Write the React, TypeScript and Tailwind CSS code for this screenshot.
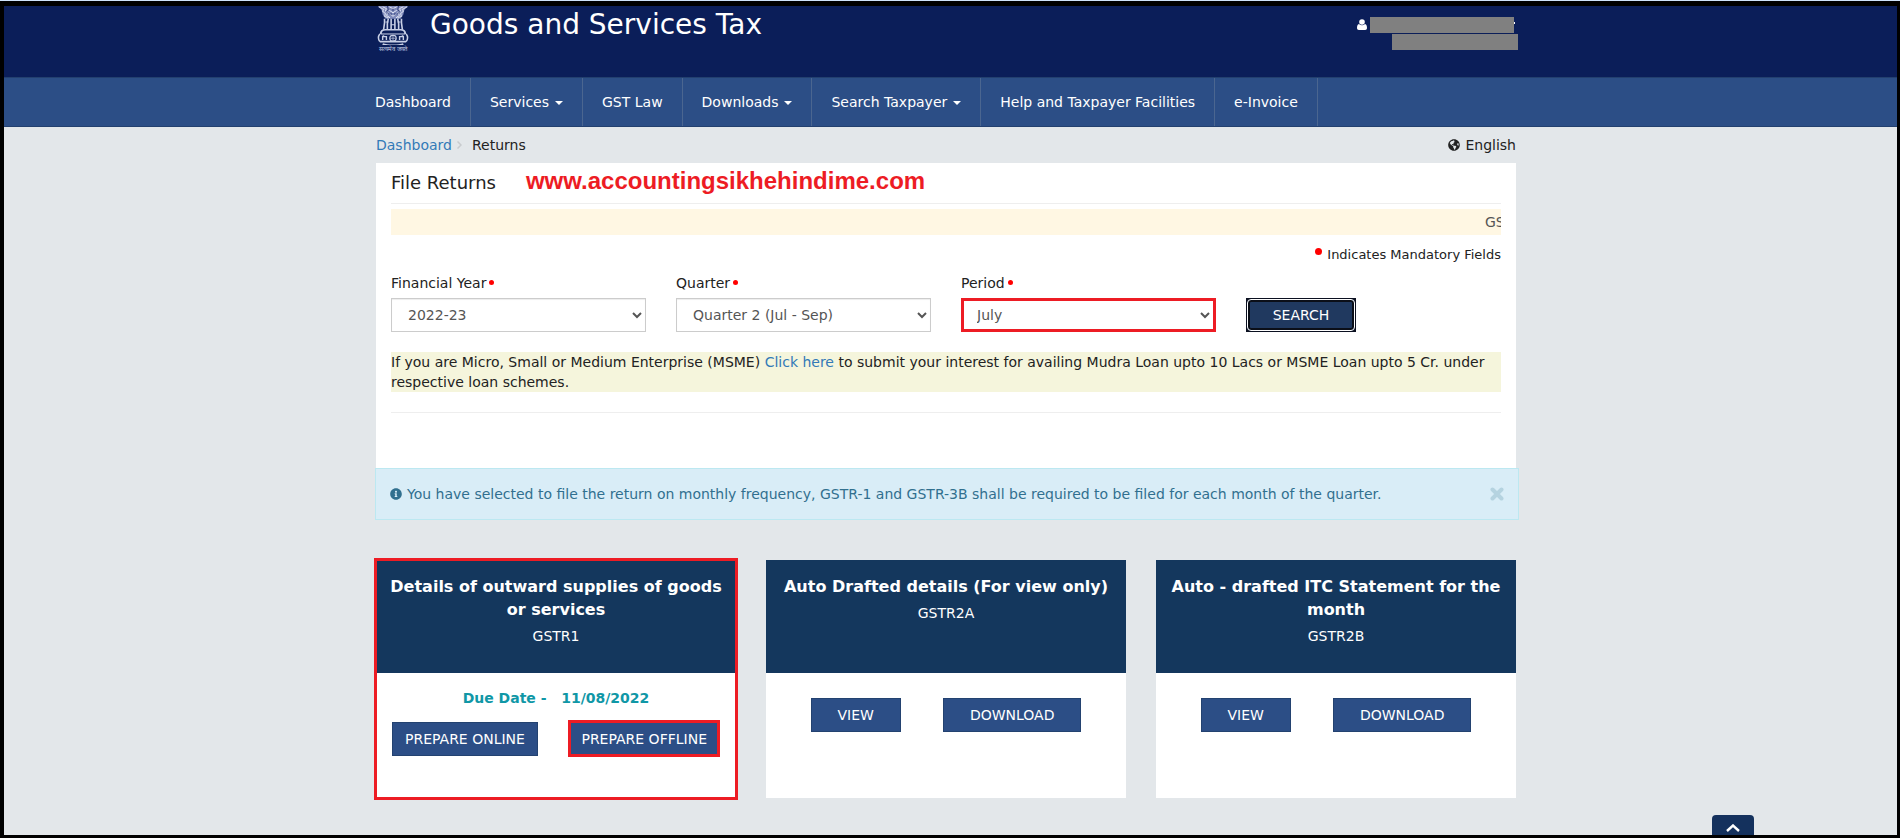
import React from "react";
import { FaGlobeAmericas, FaInfoCircle } from "react-icons/fa";

const navItems = [
  { label: "Dashboard" },
  { label: "Services", menu: true },
  { label: "GST Law" },
  { label: "Downloads", menu: true },
  { label: "Search Taxpayer", menu: true },
  { label: "Help and Taxpayer Facilities" },
  { label: "e-Invoice" },
];

function Emblem() {
  return (
    <svg viewBox="0 0 34 46" preserveAspectRatio="none" className="h-[39px] w-8" fill="none" stroke="#c9d0e6" aria-label="Emblem of India">
      <path d="M1 0c1 2 3 2 4 5l1 5 3 5h16l3-5 1-5c1-3 3-3 4-5z" fill="#7f8abb" stroke="none" />
      <path d="M2 1l5 3-1 2 3 3-1 3 4 2M32 1l-5 3 1 2-3 3 1 3-4 2" strokeWidth="1.4" />
      <path d="M6 1l4 2-1 3 3 2-2 3 4 3M28 1l-4 2 1 3-3 2 2 3-4 3M13 1l4 2 4-2M13 5l4 3 4-3M14 10l3 2 3-2" stroke="#eef1fa" strokeWidth="1" />
      <path d="M11 0l1 4-2 3 3 3M23 0l-1 4 2 3-3 3M17 3v3M15 8v3M19 8v3" stroke="#24336d" strokeWidth=".9" />
      <path d="M8 15v5l-1 8M12 15l-1 6v7M15 15v13M19 15v13M22 15l1 6v7M26 15v5l1 8" strokeWidth="1.7" />
      <path d="M9 19h3M22 19h3M15 22h4" strokeWidth="1.2" />
      <path d="M4 33c0-3 2-5 5-5h16c3 0 5 2 5 5M3 42h28M6 45c5 2 17 2 22 0" strokeWidth="2" />
      <path d="M4 33h26" strokeWidth="1.2" />
      <path d="M3 33c-2 3-2 6 0 9M31 33c2 3 2 6 0 9" strokeWidth="1.6" />
      <circle cx="17" cy="38" r="3.4" strokeWidth="1.3" />
      <path d="M17 35v6M14 38h6" strokeWidth=".8" />
      <path d="M6 40v-4h4v4M8 36l-2-1M24 40v-4h4v4M26 36l2-1" strokeWidth="1.5" />
    </svg>
  );
}

function UserIcon() {
  return (
    <svg viewBox="0 0 10 11" className="h-[11px] w-[10px]" fill="#fff" aria-hidden="true">
      <circle cx="5" cy="3" r="2.8" />
      <path d="M2 5c-1.600.6-2 2.200-2 4 0 1.300.7 2 1.800 2h6.400C9.300 11 10 10.300 10 9c0-1.800-.4-3.400-2-4-1.600 1.600-4.400 1.600-6 0z" />
    </svg>
  );
}

function Caret() {
  return (
    <svg viewBox="0 0 8 4" className="mt-px h-1 w-2" fill="currentColor" aria-hidden="true">
      <path d="M0 0h8L4 4z" />
    </svg>
  );
}

function RequiredDot() {
  return <span aria-hidden="true" className="mb-1 ml-[3px] inline-block size-[5px] rounded-full bg-[#ff0000] align-middle" />;
}

function Field({ id, label, value, highlight }: { id: string; label: string; value: string; highlight?: boolean }) {
  return (
    <div className="px-[15px]">
      <label htmlFor={id} className="block h-[25px]">
        {label}<RequiredDot />
      </label>
      <select
        id={id}
        className={
          highlight
            ? "h-[34px] w-full border-[3px] border-[#ed1c24] bg-white px-[9px] text-[#555]"
            : "h-[34px] w-full border border-[#ccc] bg-white px-[12px] text-[#555] shadow-[inset_0_1px_1px_rgba(0,0,0,0.075)]"
        }
      >
        <option>{value}</option>
      </select>
    </div>
  );
}

const btn = "h-[34px] border border-[#234270] bg-[#2c4e86] text-white";

function Card({ title, code, highlight, children }: { title: string; code: string; highlight?: boolean; children: React.ReactNode }) {
  return (
    <section className={highlight ? "bg-white outline-3 -outline-offset-1 outline-[#ed1c24]" : "bg-white"}>
      <header className="h-[113px] bg-[#14375d] px-[10px] pt-[15px] text-center text-white">
        <h2 className="text-[16px] leading-[23px] font-bold">{title}</h2>
        <p className="mt-[5px] leading-5">{code}</p>
      </header>
      <div className="h-[125px]">{children}</div>
    </section>
  );
}

function ViewActions() {
  return (
    <div className="flex justify-center gap-[42px] pt-[25px]">
      <button className={`${btn} px-[26px]`}>VIEW</button>
      <button className={`${btn} px-[26px]`}>DOWNLOAD</button>
    </div>
  );
}

export default function App() {
  return (
    <div className="border-t border-[#cfe3fb] font-['DejaVu_Sans',sans-serif] text-[14px] leading-5 text-[#222]">
      <div className="relative overflow-hidden border-x-[3px] border-t-[5px] border-b-[3px] border-l-4 border-black bg-[#e3e7ea]">
        <header className="h-[71px] bg-[#0b1e59] pr-[9px]">
          <div className="mx-auto flex max-w-[1140px] items-start">
            <div className="flex w-[34px] flex-col items-center">
              <Emblem />
              <span className="text-[6px] leading-[7px] whitespace-nowrap text-[#c9d0e6]">सत्यमेव जयते</span>
            </div>
            <h1 className="ml-5 text-[28px] leading-[38px] text-white">Goods and Services Tax</h1>
            <div className="ml-auto flex items-start gap-[3px] pt-[11px]">
              <div className="pt-[2px]">
                <UserIcon />
              </div>
              <div className="-mr-[2px] flex flex-col items-end gap-px">
                <div className="flex items-center pr-[3px]">
                  <div className="h-4 w-36 bg-[#808080]" />
                  <span className="mb-1 h-[2px] w-px bg-white" />
                </div>
                <div className="h-4 w-[126px] bg-[#808080]" />
              </div>
            </div>
          </div>
        </header>
        <nav className="border-y border-[#23406f] bg-[#2c4e86] pr-[9px]">
          <ul className="mx-auto flex h-12 max-w-[1140px] items-stretch">
            {navItems.map((n, i) => (
              <li key={n.label} className={i === 0 ? "-ml-5 flex border-r border-[#4b6690]" : "flex border-r border-[#4b6690]"}>
                <a href="#" className="flex items-center gap-[6px] px-[19px] text-white">
                  {n.label}
                  {n.menu && <Caret />}
                </a>
              </li>
            ))}
          </ul>
        </nav>
        <main className="pr-[9px]">
          <div className="mx-auto max-w-[1140px]">
            <div className="flex h-9 items-center">
              <a href="#" className="text-[#337ab7]">Dashboard</a>
              <svg viewBox="0 0 5 8" className="mr-[10px] ml-[5px] h-2 w-[5px]" fill="none" stroke="#c8cbce" strokeWidth="1.5" aria-hidden="true">
                <path d="M.5.5L4 4 .5 7.500" />
              </svg>
              <span>Returns</span>
              <button className="ml-auto flex items-center gap-[5px]">
                <FaGlobeAmericas className="size-3" />
                English
              </button>
            </div>
            <section className="h-[305px] bg-white px-[15px]">
              <div className="flex h-[41px] items-center gap-[30px] border-b border-[#eee]">
                <h2 className="text-[18px]">File Returns</h2>
                <span className="pb-[5px] font-['Liberation_Sans',sans-serif] text-[24px] leading-6 font-bold text-[#ed1c24]">www.accountingsikhehindime.com</span>
              </div>
              <div className="mt-[5px] flex h-[26px] items-center justify-end overflow-hidden bg-[#fff7e3]">
                <div className="w-4 overflow-hidden whitespace-nowrap text-[#555]">GSTR</div>
              </div>
              <div className="mt-[10px] flex justify-end gap-[5px] text-[13px]">
                <span aria-hidden="true" className="mt-[3px] size-[7px] rounded-full bg-[#ff0000]" />
                <p>Indicates Mandatory Fields</p>
              </div>
              <div className="-mx-[15px] mt-2 grid grid-cols-4">
                <Field id="year" label="Financial Year" value="2022-23" />
                <Field id="quarter" label="Quarter" value="Quarter 2 (Jul - Sep)" />
                <Field id="period" label="Period" value="July" highlight />
                <div className="px-[15px] pt-[25px]">
                  <button className="h-[34px] w-[110px] bg-[#0b1020] p-px text-white">
                    <span className="flex size-full items-center justify-center rounded-[4px] border border-white bg-[#20395f] shadow-[inset_0_0_0_2px_#0b0f18]">SEARCH</span>
                  </button>
                </div>
              </div>
              <p className="mt-5 bg-[#f5f5dc]">
                If you are Micro, Small or Medium Enterprise (MSME) <a href="#" className="text-[#337ab7]">Click here</a> to submit your interest for availing Mudra Loan upto 10 Lacs or MSME Loan upto 5 Cr. under respective loan schemes.
              </p>
              <hr className="mt-5 border-[#eee]" />
            </section>
            <div className="-mr-[3px] -ml-px flex h-[52px] items-center border border-[#bce8f1] bg-[#d9edf7] px-[14px] text-[#31708f]">
              <FaInfoCircle className="mr-[5px] size-3 shrink-0" />
              <span>You have selected to file the return on monthly frequency, GSTR-1 and GSTR-3B shall be required to be filed for each month of the quarter.</span>
              <button aria-label="Close" className="ml-auto text-[#b5d3e0]">
                <svg viewBox="0 0 14 14" className="size-[14px]" stroke="currentColor" strokeWidth="4" strokeLinecap="round" aria-hidden="true">
                  <path d="M2.500 2.500l9 9M11.500 2.500l-9 9" />
                </svg>
              </button>
            </div>
            <div className="grid grid-cols-3 gap-[30px] pt-10 pb-[37px]">
              <Card title="Details of outward supplies of goods or services" code="GSTR1" highlight>
                <p className="pt-[15px] text-center font-bold text-[#1097a6]">Due Date - &nbsp;&nbsp;11/08/2022</p>
                <div className="mt-3 flex items-center justify-between px-4">
                  <button className={`${btn} px-3`}>PREPARE ONLINE</button>
                  <button className="h-[37px] border-[3px] border-[#ed1c24] bg-[#2c4e86] px-[10px] text-white">PREPARE OFFLINE</button>
                </div>
              </Card>
              <Card title="Auto Drafted details (For view only)" code="GSTR2A">
                <ViewActions />
              </Card>
              <Card title="Auto - drafted ITC Statement for the month" code="GSTR2B">
                <ViewActions />
              </Card>
            </div>
          </div>
        </main>
        <button aria-label="Back to top" className="absolute right-[143px] bottom-0 flex h-5 w-[42px] justify-center rounded-t-[4px] bg-[#14315d] pt-[9px] text-white">
          <svg viewBox="0 0 14 8" className="h-2 w-[14px]" fill="none" stroke="currentColor" strokeWidth="2.400" aria-hidden="true">
            <path d="M1 7l6-5.500L13 7" />
          </svg>
        </button>
      </div>
    </div>
  );
}
